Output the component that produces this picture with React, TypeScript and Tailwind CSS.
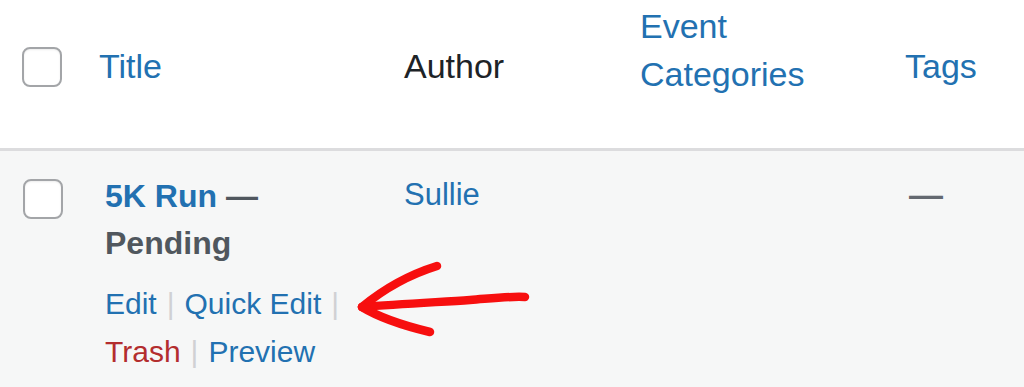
import React from "react";

const font = { fontFamily: '"Liberation Sans", Arial, sans-serif' };

function Checkbox() {
  return (
    <div className="w-[40px] h-[40px] rounded-[8px] border-2 border-[#a3a5a8] bg-white shadow-[inset_0_1px_2px_rgba(0,0,0,0.08)]" />
  );
}

function Sep() {
  return <span className="text-[#d0d1d4] mx-[10px]">|</span>;
}

export default function App() {
  return (
    <div
      className="relative w-[1024px] h-[387px] overflow-hidden bg-[#f6f7f7]"
      style={font}
    >
      {/* Header */}
      <div className="flex h-[151px] bg-white border-b-[3px] border-[#dcdcde] text-[34px] leading-[48px]">
        <div className="w-[82px] pl-[22px] pt-[47px]">
          <Checkbox />
        </div>
        <div className="w-[322px] pl-[17px] pt-[42px] text-[#2271b1]">Title</div>
        <div className="w-[236px] pt-[42px] text-[#1d2327]">Author</div>
        <div className="w-[265px] pt-[2px] text-[#2271b1]">
          <div>Event</div>
          <div>Categories</div>
        </div>
        <div className="flex-1 pt-[42px] text-[#2271b1]">Tags</div>
      </div>

      {/* Row */}
      <div className="flex">
        <div className="w-[82px] pl-[23px] pt-[28px]">
          <Checkbox />
        </div>
        <div className="w-[322px] pl-[23px] pt-[22px]">
          <div className="text-[32px] leading-[47px] font-bold">
            <span className="text-[#2271b1]">5K Run</span>
            <span className="text-[#50575e]"> —<br />Pending</span>
          </div>
          <div className="mt-[13px] text-[30px] leading-[48px] text-[#2271b1]">
            <div>
              <span>Edit</span>
              <Sep />
              <span>Quick Edit</span>
              <Sep />
            </div>
            <div>
              <span className="text-[#b32d2e]">Trash</span>
              <Sep />
              <span>Preview</span>
            </div>
          </div>
        </div>
        <div className="w-[236px] pt-[20px] text-[31px] leading-[47px] text-[#2271b1]">
          Sullie
        </div>
        <div className="w-[265px]" />
        <div className="flex-1 pl-[4px] pt-[19px] text-[34px] leading-[48px] font-bold text-[#646970]">
          —
        </div>
      </div>

      {/* Hand-drawn arrow annotation */}
      <svg
        className="absolute left-0 top-0 pointer-events-none"
        width="1024"
        height="387"
        viewBox="0 0 1024 387"
      >
        <g
          fill="none"
          stroke="#f70f0f"
          strokeWidth="8.5"
          strokeLinecap="round"
          strokeLinejoin="round"
        >
          <path d="M362 307 C 400 304, 440 302, 470 300 C 495 298, 512 296, 525 297" />
          <path d="M362 307 C 380 292, 405 276, 437 266" />
          <path d="M362 307 C 380 318, 405 326, 430 332" />
        </g>
      </svg>
    </div>
  );
}
